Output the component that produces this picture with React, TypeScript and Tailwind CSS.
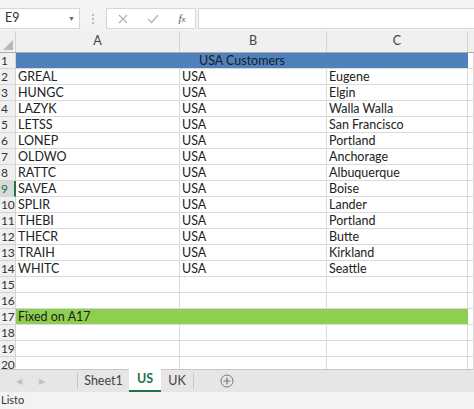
import React from 'react'

const rows: [string, string, string][] = [
  ['GREAL', 'USA', 'Eugene'],
  ['HUNGC', 'USA', 'Elgin'],
  ['LAZYK', 'USA', 'Walla Walla'],
  ['LETSS', 'USA', 'San Francisco'],
  ['LONEP', 'USA', 'Portland'],
  ['OLDWO', 'USA', 'Anchorage'],
  ['RATTC', 'USA', 'Albuquerque'],
  ['SAVEA', 'USA', 'Boise'],
  ['SPLIR', 'USA', 'Lander'],
  ['THEBI', 'USA', 'Portland'],
  ['THECR', 'USA', 'Butte'],
  ['TRAIH', 'USA', 'Kirkland'],
  ['WHITC', 'USA', 'Seattle'],
]

const cols = 'grid grid-cols-[16px_164px_147px_141px_1fr]'

function RowHead({ n, active }: { n: number; active?: boolean }) {
  return (
    <div
      className={`border-b border-r border-[#d4d4d4] pl-[1px] leading-[15px] text-[12px] whitespace-nowrap overflow-hidden tracking-[-0.3px] ${
        active ? 'text-[#217346] border-r-2 border-r-[#217346] bg-[#d9d9d9]' : 'text-[#333] bg-[#f0f0f0]'
      }`}
    >
      {n}
    </div>
  )
}

function Cell({ children }: { children?: React.ReactNode }) {
  return (
    <div className="border-b border-r border-[#dadada] pl-[2px] leading-[15px] text-[#222] whitespace-nowrap overflow-hidden">
      {children}
    </div>
  )
}

function EmptyRow({ n }: { n: number }) {
  return (
    <div className={`${cols} h-[16px]`}>
      <RowHead n={n} />
      <Cell />
      <Cell />
      <Cell />
      <Cell />
    </div>
  )
}

export default function App() {
  return (
    <div
      className="w-[474px] h-[409px] overflow-hidden flex flex-col bg-white text-[12.5px]"
      style={{ fontFamily: 'Lato, "Noto Sans", sans-serif' }}
    >
      {/* formula bar */}
      <div className="h-[31px] bg-[#f3f3f3] flex items-center pt-[8px] pb-[2px] shrink-0">
        <div className="w-[80px] h-[21px] bg-white border border-[#d6d6d6] border-l-0 flex items-center justify-between pl-[5px] pr-[4px]">
          <span className="text-[#333]">E9</span>
          <span className="text-[7px] text-[#666]">▼</span>
        </div>
        <div className="w-[26px] flex flex-col items-center gap-[2px]">
          <span className="w-[2px] h-[2px] bg-[#aaa] rounded-full" />
          <span className="w-[2px] h-[2px] bg-[#aaa] rounded-full" />
          <span className="w-[2px] h-[2px] bg-[#aaa] rounded-full" />
        </div>
        <div className="w-[90px] h-[21px] bg-white border border-[#d6d6d6] flex items-center justify-around pl-[2px]">
          <svg width="10" height="10" viewBox="0 0 10 10">
            <path d="M1 1 L9 9 M9 1 L1 9" stroke="#b4b4b4" strokeWidth="1.2" fill="none" />
          </svg>
          <svg width="12" height="10" viewBox="0 0 12 10">
            <path d="M1 5 L4.5 8.5 L11 1" stroke="#b4b4b4" strokeWidth="1.2" fill="none" />
          </svg>
          <span className="italic text-[#555] text-[11px]" style={{ fontFamily: '"Liberation Serif", serif' }}>
            f<span className="text-[9px]">x</span>
          </span>
        </div>
        <div className="flex-1 h-[21px] ml-[2px] bg-white border border-r-0 border-[#d6d6d6]" />
      </div>

      {/* column headers */}
      <div className={`${cols} h-[22px] bg-[#f0f0f0] border-b border-[#ababab] shrink-0`}>
        <div className="border-r border-[#d4d4d4] relative">
          <svg className="absolute right-[2px] bottom-[2px]" width="10" height="10" viewBox="0 0 10 10">
            <path d="M10 0 L10 10 L0 10 Z" fill="#b8b8b8" />
          </svg>
        </div>
        {['A', 'B', 'C'].map(c => (
          <div key={c} className="border-r border-[#d4d4d4] flex items-center justify-center text-[#444]">
            {c}
          </div>
        ))}
        <div />
      </div>

      {/* sheet */}
      <div className="flex-1 overflow-hidden">
        <div className={`${cols} h-[16px]`}>
          <RowHead n={1} />
          <div className="col-span-3 bg-[#4f81bd] border-b border-[#dadada] text-center leading-[15px] text-[#1c1c1c]">
            USA Customers
          </div>
          <Cell />
        </div>
        {rows.map((r, i) => (
          <div key={i} className={`${cols} h-[16px]`}>
            <RowHead n={i + 2} active={i + 2 === 9} />
            <Cell>{r[0]}</Cell>
            <Cell>{r[1]}</Cell>
            <Cell>{r[2]}</Cell>
            <Cell />
          </div>
        ))}
        <EmptyRow n={15} />
        <EmptyRow n={16} />
        <div className={`${cols} h-[16px]`}>
          <RowHead n={17} />
          <div className="col-span-3 bg-[#8fcf4f] border-b border-[#dadada] pl-[2px] leading-[15px] text-[#1c1c1c]">
            Fixed on A17
          </div>
          <Cell />
        </div>
        <EmptyRow n={18} />
        <EmptyRow n={19} />
        <EmptyRow n={20} />
      </div>

      {/* sheet tabs */}
      <div className="h-[23px] bg-[#e6e6e6] border-t border-[#c6c6c6] flex items-stretch shrink-0">
        <div className="w-[77px] flex items-center justify-start gap-[17px] pl-[16px] text-[#c0c0c0] text-[8px]">
          <span>◀</span>
          <span>▶</span>
        </div>
        <div className="w-px bg-[#c6c6c6] my-[3px]" />
        <div className="w-[51px] flex items-center justify-center text-[#444]">Sheet1</div>
        <div className="w-[32px] bg-white flex items-center justify-center font-bold text-[#217346] border-b-2 border-[#217346] -mt-px">
          US
        </div>
        <div className="w-[32px] flex items-center justify-center text-[#444]">UK</div>
        <div className="w-px bg-[#c6c6c6] my-[3px]" />
        <div className="w-[66px] flex items-center justify-center">
          <svg width="14" height="14" viewBox="0 0 14 14">
            <circle cx="7" cy="7" r="6" stroke="#777" strokeWidth="1" fill="none" />
            <path d="M7 3.5 V10.5 M3.5 7 H10.5" stroke="#777" strokeWidth="1.2" />
          </svg>
        </div>
      </div>

      {/* status bar */}
      <div className="h-[17px] bg-[#f3f3f3] flex items-center pl-[1px] text-[11px] text-[#333] shrink-0">
        Listo
      </div>
    </div>
  )
}
